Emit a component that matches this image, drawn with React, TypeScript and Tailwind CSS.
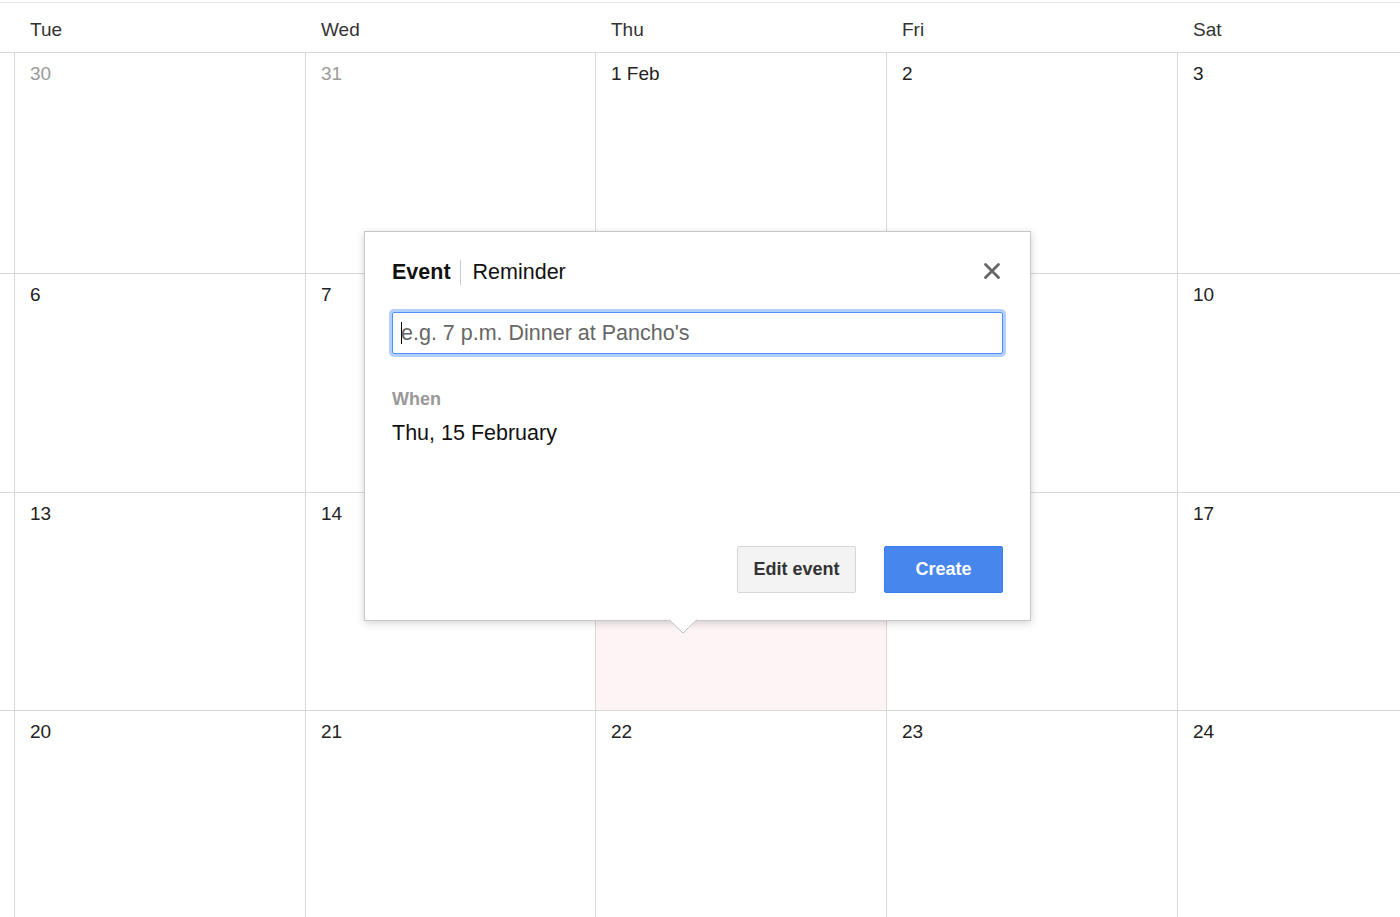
import { X } from "lucide-react";

type Day = { label: string; muted?: boolean; today?: boolean };

const DAYS = ["Tue", "Wed", "Thu", "Fri", "Sat"];

const WEEKS: { height: string; days: Day[] }[] = [
  {
    height: "h-[221px]",
    days: [{ label: "30", muted: true }, { label: "31", muted: true }, { label: "1 Feb" }, { label: "2" }, { label: "3" }],
  },
  {
    height: "h-[219px]",
    days: [{ label: "6" }, { label: "7" }, { label: "8" }, { label: "9" }, { label: "10" }],
  },
  {
    height: "h-[218px]",
    days: [{ label: "13" }, { label: "14" }, { label: "15", today: true }, { label: "16" }, { label: "17" }],
  },
  {
    height: "h-[260px]",
    days: [{ label: "20" }, { label: "21" }, { label: "22" }, { label: "23" }, { label: "24" }],
  },
];

const COLS = "grid grid-cols-[14px_291px_290px_291px_291px_1fr]";

function QuickAdd() {
  return (
    <div className="absolute left-[364px] top-[231px] flex h-[390px] w-[667px] flex-col border border-[#c8c8c8] bg-white px-[27px] pt-[27px] pb-[27px] shadow-[0_2px_8px_rgba(0,0,0,0.18)]">
      {/* tabs + close */}
      <div className="flex h-[26px] items-center justify-between">
        <div className="flex items-center text-[21.5px] leading-[26px] text-[#111]">
          <span className="font-bold">Event</span>
          <span className="mx-[9px] h-[25px] w-px bg-[#c8c8c8]" />
          <span className="ml-[3px]">Reminder</span>
        </div>
        <X className="mr-[-2px] -mt-[3px] h-[26px] w-[26px] text-[#666]" strokeWidth={2.6} />
      </div>

      {/* title input */}
      <div className="mt-[27px] flex h-[42px] items-center rounded-[2px] border border-[#4d90fe] pl-[8px] shadow-[0_0_0_3px_rgba(125,175,255,0.6)]">
        <span className="mr-[-1px] h-[22px] w-px bg-black" />
        <span className="text-[21.5px] leading-[26px] text-[#666]">e.g. 7 p.m. Dinner at Pancho's</span>
      </div>

      <div className="mt-[34px] text-[18px] font-bold leading-[22px] text-[#999]">When</div>
      <div className="mt-[10px] text-[21.5px] leading-[26px] text-[#111]">Thu, 15 February</div>

      <div className="flex flex-1 items-end justify-end gap-[28px]">
        <button className="h-[47px] w-[119px] rounded-[2px] border border-[#d6d6d6] bg-[#f3f3f3] text-[18px] font-bold text-[#333]">
          Edit event
        </button>
        <button className="h-[47px] w-[119px] rounded-[2px] border border-[#3a7de8] bg-[#4787ed] text-[18px] font-bold text-white">
          Create
        </button>
      </div>

      {/* pointer */}
      <svg
        className="absolute left-[303px] top-full -mt-px"
        width="30"
        height="15"
        viewBox="0 0 30 15"
      >
        <polygon points="0,0 30,0 15,14" fill="white" />
        <polyline points="1,0.5 15,14 29,0.5" fill="none" stroke="#bdbdbd" strokeWidth="1" />
      </svg>
    </div>
  );
}

export default function App() {
  return (
    <div className="relative h-[917px] w-[1400px] overflow-hidden bg-white font-['Liberation_Sans',Arial,sans-serif]">
      <div className="h-[3px] border-b border-[#e6e6e6]" />

      {/* weekday header */}
      <div className={`${COLS} h-[50px] border-b border-[#d8d8d8]`}>
        <div />
        {DAYS.map((d) => (
          <div key={d} className="pl-[16px] pt-[15px] text-[19px] leading-[24px] text-[#333]">
            {d}
          </div>
        ))}
      </div>

      {/* weeks */}
      {WEEKS.map((w, i) => (
        <div key={i} className={`${COLS} ${w.height} border-b border-[#d8d8d8]`}>
          <div />
          {w.days.map((d) => (
            <div
              key={d.label}
              className={`border-l border-[#d8d8d8] pl-[15px] pt-[9px] text-[19px] leading-[24px] ${
                d.today ? "bg-[#fdf5f5]" : ""
              } ${d.muted ? "text-[#9a9a9a]" : "text-[#222]"}`}
            >
              {d.label}
            </div>
          ))}
        </div>
      ))}

      <QuickAdd />
    </div>
  );
}
